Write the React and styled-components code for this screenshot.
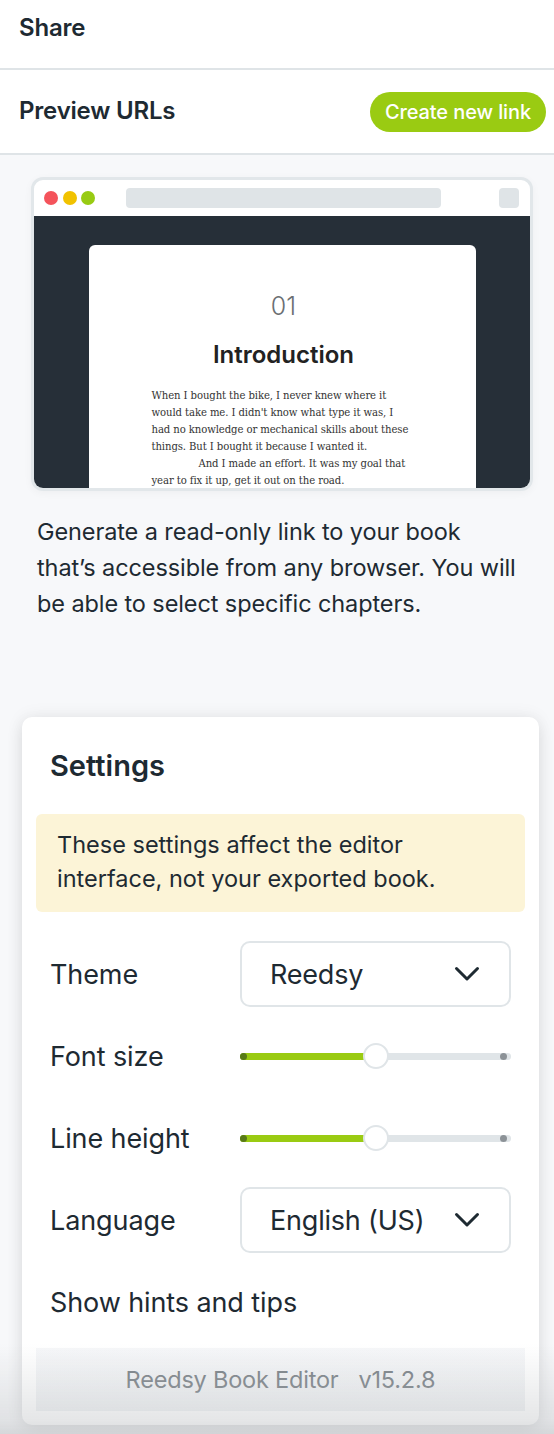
import { createGlobalStyle, styled } from "styled-components"

const GlobalStyle = createGlobalStyle`
    body {
        margin: 0;
        background: #f7f8fa;
        font-family: Inter, "Noto Sans", sans-serif;
        color: #1e2a32;
    }
`

const Page = styled.div`
    width: 554px;
    min-height: 1434px;
    overflow: hidden;
`

const Bar = styled.div`
    display: flex;
    align-items: center;
    justify-content: space-between;
    height: ${(p) => p.$height}px;
    padding: 0 8px 0 19px;
    background: #fff;
    border-bottom: 2px solid #dfe4e7;
    box-sizing: border-box;
`

const BarTitle = styled.h2`
    margin: 0;
    font-size: 24px;
    font-weight: 600;
    letter-spacing: -0.2px;
    transform: translateY(${(p) => p.$shift || 0}px);
`

const GreenButton = styled.button`
    width: 176px;
    height: 40px;
    padding: 0;
    border: none;
    border-radius: 20px;
    background: #9acb12;
    color: #fff;
    font-family: inherit;
    font-size: 20px;
    font-weight: 500;
    letter-spacing: -0.1px;
    cursor: pointer;
`

const Content = styled.section`
    padding: 22px 21px 0 31px;
`

const BrowserFrame = styled.div`
    height: 314px;
    border: 3px solid #e2e7ea;
    border-radius: 12px;
    overflow: hidden;
    background: #fff;
    box-sizing: border-box;
    display: flex;
    flex-direction: column;
    box-shadow: 0 2px 8px rgba(0, 0, 0, 0.04);
`

const TitleBar = styled.div`
    height: 36px;
    flex-shrink: 0;
    display: flex;
    align-items: center;
    padding: 0 11px 0 10px;
`

const Dot = styled.span`
    width: 14px;
    height: 14px;
    border-radius: 50%;
    background: ${(p) => p.$color};
    margin-right: 4.5px;
`

const UrlBar = styled.div`
    flex: 1;
    height: 20px;
    margin: 0 58px 0 26px;
    border-radius: 4px;
    background: #dfe4e7;
`

const SquareButton = styled.div`
    width: 20px;
    height: 20px;
    border-radius: 4px;
    background: #dfe4e7;
`

const DarkArea = styled.div`
    flex: 1;
    background: #262f38;
    padding-top: 29px;
    overflow: hidden;
`

const BookPage = styled.div`
    width: 387px;
    height: 100%;
    margin: 0 auto;
    background: #fff;
    border-radius: 6px 6px 0 0;
    padding: 46px 60px 0 63px;
    box-sizing: border-box;
    text-align: center;
`

const ChapterNumber = styled.div`
    font-size: 25px;
    font-weight: 300;
    color: #6b6f73;
    line-height: 30px;
`

const ChapterTitle = styled.h1`
    margin: 19px 0 0;
    font-size: 24px;
    font-weight: 600;
    color: #222;
    line-height: 30px;
`

const BookText = styled.p`
    margin: 17px 0 0;
    font-family: "DejaVu Serif", "Liberation Serif", serif;
    font-size: 10.1px;
    line-height: 17px;
    color: #333;
    text-align: left;
    letter-spacing: -0.1px;
    white-space: nowrap;
`

const Indent = styled.span`
    padding-left: 47px;
`

const Description = styled.p`
    margin: 23px 0 0 6px;
    font-size: 23.5px;
    line-height: 36px;
    letter-spacing: -0.1px;
    color: #1e2a32;
    white-space: nowrap;
`

const Card = styled.div`
    margin: 95px 15px 0 22px;
    padding: 14px;
    background: #fff;
    border-radius: 10px;
    box-shadow: 0 0 18px rgba(0, 0, 0, 0.07), 0 6px 16px rgba(0, 0, 0, 0.08);
`

const CardTitle = styled.h3`
    margin: 0;
    padding: 17px 14px 0;
    font-size: 29px;
    font-weight: 600;
    line-height: 36px;
`

const Notice = styled.div`
    margin-top: 30px;
    padding: 14px 21px 16px;
    background: #fcf4d7;
    border-radius: 6px;
    font-size: 23.5px;
    line-height: 34px;
    white-space: nowrap;
`

const Rows = styled.div`
    display: flex;
    flex-direction: column;
    gap: 16px;
    margin-top: 29px;
    padding: 0 14px;
`

const Row = styled.div`
    display: grid;
    grid-template-columns: ${(p) => (p.$single ? "1fr" : "190px 1fr")};
    align-items: center;
    height: 66px;
`

const Label = styled.span`
    font-size: 27px;
    letter-spacing: -0.1px;
    color: #1e2a32;
`

const Select = styled.div`
    height: 66px;
    display: flex;
    align-items: center;
    justify-content: space-between;
    padding: 0 29px 0 28px;
    border: 2px solid #e0e5e8;
    border-radius: 10px;
    box-sizing: border-box;
    font-size: 27px;
    letter-spacing: -0.2px;
`

const Slider = styled.div`
    position: relative;
    height: 7px;
    border-radius: 4px;
    background: #e0e5e8;
`

const SliderFill = styled.div`
    height: 100%;
    border-radius: 4px;
    background: #9acb12;
`

const EndDot = styled.span`
    position: absolute;
    top: 0;
    ${(p) => (p.$right ? "right: 4px;" : "left: 0;")}
    width: 7px;
    height: 7px;
    border-radius: 50%;
    background: ${(p) => (p.$right ? "#8c9297" : "#587a18")};
`

const Thumb = styled.span`
    position: absolute;
    top: 50%;
    width: 26px;
    height: 26px;
    margin: -13px 0 0 -13px;
    border-radius: 50%;
    background: #fff;
    border: 2px solid #e0e5e8;
    box-sizing: border-box;
`

const Footer = styled.div`
    margin-top: 13px;
    height: 63px;
    display: flex;
    align-items: center;
    justify-content: center;
    gap: 20px;
    background: linear-gradient(#f6f7f9, #eff1f3);
    font-size: 23.5px;
    letter-spacing: -0.2px;
    color: #7a8187;
`

const BottomFade = styled.div`
    position: fixed;
    left: 0;
    right: 0;
    bottom: 0;
    height: 90px;
    background: linear-gradient(rgba(190, 193, 196, 0), rgba(190, 193, 196, 0.4) 85%, rgba(190, 193, 196, 0.6));
    pointer-events: none;
`

function Chevron() {
    return (
        <svg width="26" height="16" viewBox="0 0 26 16" fill="none">
            <polyline
                points="2.5,2.5 13,13 23.5,2.5"
                stroke="#1e2a32"
                strokeWidth="3"
                strokeLinecap="round"
                strokeLinejoin="round"
            />
        </svg>
    )
}

function RangeSlider({ value }) {
    return (
        <Slider>
            <SliderFill style={{ width: `${value}%` }} />
            <EndDot />
            <EndDot $right />
            <Thumb style={{ left: `${value}%` }} />
        </Slider>
    )
}

function Dropdown({ children }) {
    return (
        <Select>
            <span>{children}</span>
            <Chevron />
        </Select>
    )
}

export default function App() {
    return (
        <Page>
            <GlobalStyle />
            <Bar $height={70}>
                <BarTitle $shift={-7}>Share</BarTitle>
            </Bar>
            <Bar $height={85}>
                <BarTitle $shift={-1}>Preview URLs</BarTitle>
                <GreenButton>Create new link</GreenButton>
            </Bar>

            <Content>
                <BrowserFrame>
                    <TitleBar>
                        <Dot $color="#f4535b" />
                        <Dot $color="#f1c200" />
                        <Dot $color="#98cb13" />
                        <UrlBar />
                        <SquareButton />
                    </TitleBar>
                    <DarkArea>
                        <BookPage>
                            <ChapterNumber>01</ChapterNumber>
                            <ChapterTitle>Introduction</ChapterTitle>
                            <BookText>
                                When I bought the bike, I never knew where it
                                <br />
                                would take me. I didn't know what type it was, I
                                <br />
                                had no knowledge or mechanical skills about these
                                <br />
                                things. But I bought it because I wanted it.
                                <br />
                                <Indent>And I made an effort. It was my goal that</Indent>
                                <br />
                                year to fix it up, get it out on the road.
                            </BookText>
                        </BookPage>
                    </DarkArea>
                </BrowserFrame>
                <Description>
                    Generate a read-only link to your book
                    <br />
                    that’s accessible from any browser. You will
                    <br />
                    be able to select specific chapters.
                </Description>
            </Content>

            <Card>
                <CardTitle>Settings</CardTitle>
                <Notice>
                    These settings affect the editor
                    <br />
                    interface, not your exported book.
                </Notice>
                <Rows>
                    <Row>
                        <Label>Theme</Label>
                        <Dropdown>Reedsy</Dropdown>
                    </Row>
                    <Row>
                        <Label>Font size</Label>
                        <RangeSlider value={50} />
                    </Row>
                    <Row>
                        <Label>Line height</Label>
                        <RangeSlider value={50} />
                    </Row>
                    <Row>
                        <Label>Language</Label>
                        <Dropdown>English (US)</Dropdown>
                    </Row>
                    <Row $single>
                        <Label>Show hints and tips</Label>
                    </Row>
                </Rows>
                <Footer>
                    <span>Reedsy Book Editor</span>
                    <span>v15.2.8</span>
                </Footer>
            </Card>
            <BottomFade />
        </Page>
    )
}
